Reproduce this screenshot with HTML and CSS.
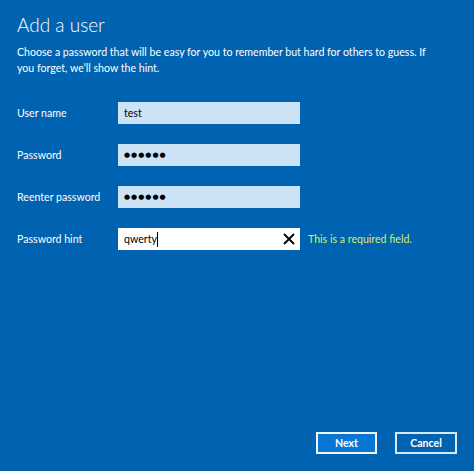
FILE: index.html
```html
<!DOCTYPE html>
<html>
<head>
<meta charset="utf-8">
<link rel="stylesheet" href="styles.css">
</head>
<body>
<div class="page">
  <h1 class="title">Add a user</h1>
  <p class="desc">Choose a password that will be easy for you to remember but hard for others to guess. If you forget, we’ll show the hint.</p>
  <div class="form">
    <div class="row">
      <span class="label">User name</span>
      <div class="field">test</div>
    </div>
    <div class="row">
      <span class="label">Password</span>
      <div class="field dots">●●●●●●</div>
    </div>
    <div class="row">
      <span class="label">Reenter password</span>
      <div class="field dots">●●●●●●</div>
    </div>
    <div class="row">
      <span class="label">Password hint</span>
      <div class="field focus"><span class="val">qwerty</span><span class="caret"></span>
        <svg class="clear" width="12" height="12" viewBox="0 0 12 12"><path d="M1 1L11 11M11 1L1 11" stroke="#000" stroke-width="1.8"/></svg>
      </div>
      <span class="error">This is a required field.</span>
    </div>
  </div>
  <div class="footer">
    <button class="btn primary">Next</button>
    <button class="btn">Cancel</button>
  </div>
</div>
</body>
</html>
```
FILE: styles.css
```css
html, body {
  margin: 0;
  padding: 0;
  background: #0063b1;
}
.page {
  height: 471px;
  box-sizing: border-box;
  padding: 11px 17px 17px 17px;
  display: flex;
  flex-direction: column;
  font-family: "Lato", "Open Sans", sans-serif;
  color: #fff;
}
.title {
  margin: 0;
  font-size: 19px;
  font-weight: 300;
  line-height: 28px;
}
.desc {
  margin: 5px 0 0 0;
  font-size: 10.6px;
  line-height: 16px;
  width: 412px;
}
.form {
  margin-top: 26px;
  display: flex;
  flex-direction: column;
  gap: 20px;
}
.row {
  display: flex;
  align-items: center;
  height: 22px;
}
.label {
  width: 101px;
  font-size: 10.6px;
}
.field {
  width: 182px;
  height: 22px;
  box-sizing: border-box;
  background: #cce3f5;
  color: #000;
  font-size: 10.6px;
  line-height: 22px;
  padding-left: 6px;
  display: flex;
  align-items: center;
}
.dots {
  font-family: "DejaVu Sans", sans-serif;
  font-size: 7px;
  letter-spacing: 1px;
}
.focus {
  background: #fff;
}
.caret {
  width: 1px;
  height: 15px;
  background: #000;
}
.clear {
  margin-left: auto;
  margin-right: 5px;
}
.error {
  margin-left: 8px;
  font-size: 10.6px;
  color: #cdf06a;
}
.footer {
  margin-top: auto;
  display: flex;
  justify-content: flex-end;
  gap: 18px;
}
.btn {
  width: 62px;
  height: 22px;
  box-sizing: border-box;
  border: 2px solid #d7e9f7;
  background: #0063b1;
  color: #fff;
  font-family: "Lato", "Open Sans", sans-serif;
  font-size: 10.6px;
  font-weight: 700;
  padding: 0;
}
.primary {
  background: #0a76d3;
  border-color: #eef6fc;
  width: 61px;
}
```
